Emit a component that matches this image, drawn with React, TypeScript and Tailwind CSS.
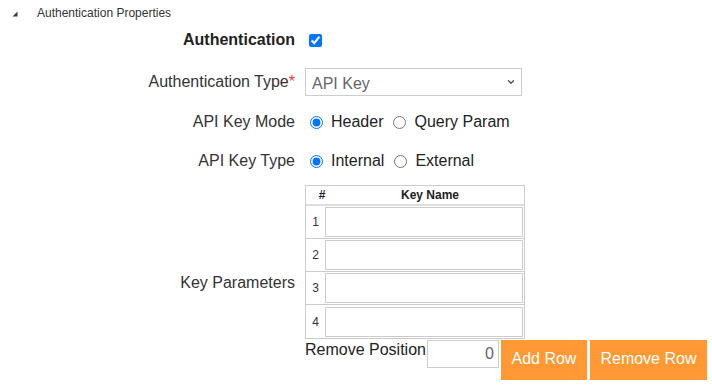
import { ChevronDown } from 'lucide-react';

const FONT = "font-['Liberation_Sans',Arial,sans-serif]";

function Label({ children }: { children: React.ReactNode }) {
  return <div className="w-[297px] shrink-0 pr-[2px] text-right text-[16px] text-[#333]">{children}</div>;
}

export default function App() {
  const rows = [1, 2, 3, 4];

  return (
    <div className={`${FONT} w-[712px] h-[385px] bg-white text-[#333] overflow-hidden`}>
      {/* section header */}
      <div className="flex h-[26px] items-center pl-[12px]">
        <svg width="6" height="6" viewBox="0 0 6 6" className="mt-[1px]">
          <polygon points="5.5,0.5 5.5,5.5 0.5,5.5" fill="#3a3a3a" />
        </svg>
        <span className="ml-[19px] text-[12px] text-[#333]">Authentication Properties</span>
      </div>

      {/* Authentication */}
      <div className="flex h-[28px] items-center">
        <div className="w-[297px] shrink-0 pr-[2px] text-right text-[16px] font-bold text-[#222]">Authentication</div>
        <input type="checkbox" defaultChecked className="ml-[12px] h-[13px] w-[13px] accent-[#0075ff]" />
      </div>

      {/* Authentication Type */}
      <div className="mt-[14px] flex h-[28px] items-center">
        <Label>
          Authentication Type<span className="text-[#e53935]">*</span>
        </Label>
        <div className="relative ml-[8px] h-[28px] w-[217px] border border-[#ccc] bg-white">
          <span className="absolute left-[6px] top-[3px] text-[16px] text-[#666]">API Key</span>
          <ChevronDown className="absolute right-[5px] top-[8px] h-[10px] w-[10px] text-[#555]" strokeWidth={3.5} />
        </div>
      </div>

      {/* API Key Mode */}
      <div className="mt-[12px] flex h-[28px] items-center">
        <Label>API Key Mode</Label>
        <div className="ml-[8px] flex items-center text-[16px] text-[#222]">
          <input type="radio" name="mode" defaultChecked className="ml-[5px] h-[13px] w-[13px] accent-[#0075ff]" />
          <span className="ml-[8px]">Header</span>
          <input type="radio" name="mode" className="ml-[10px] h-[13px] w-[13px]" />
          <span className="ml-[8px]">Query Param</span>
        </div>
      </div>

      {/* API Key Type */}
      <div className="mt-[11px] flex h-[28px] items-center">
        <Label>API Key Type</Label>
        <div className="ml-[8px] flex items-center text-[16px] text-[#222]">
          <input type="radio" name="ktype" defaultChecked className="ml-[5px] h-[13px] w-[13px] accent-[#0075ff]" />
          <span className="ml-[8px]">Internal</span>
          <input type="radio" name="ktype" className="ml-[10px] h-[13px] w-[13px]" />
          <span className="ml-[8px]">External</span>
        </div>
      </div>

      {/* Key Parameters */}
      <div className="mt-[10px] flex items-center">
        <Label>Key Parameters</Label>
        <div className="ml-[8px]">
          <div className="w-[220px] border border-[#ccc]">
            <div className="flex h-[20px] items-center border-b-2 border-[#ddd] text-[12px] font-bold text-[#222]">
              <div className="w-[32px] text-center">#</div>
              <div className="flex-1 pr-[2px] text-center">Key Name</div>
            </div>
            {rows.map((n, i) => (
              <div
                key={n}
                className={`flex h-[33px] items-center ${i < rows.length - 1 ? 'border-b border-[#ccc]' : ''}`}
              >
                <div className="w-[19px] text-center text-[12px] text-[#333]">{n}</div>
                <input className="h-[30px] w-[198px] border border-[#ccc] bg-white px-1 outline-none" />
              </div>
            ))}
          </div>
          <div className="mt-[1px] flex items-start">
            <span className="text-[16px] leading-[20px] text-[#222]">Remove Position</span>
            <input
              defaultValue="0"
              className="ml-[1px] h-[28px] w-[72px] border border-[#ccc] bg-white pr-[4px] text-right text-[16px] text-[#666] outline-none"
            />
            <button className="ml-[2px] h-[40px] w-[86px] bg-[#ff9933] pb-[2px] text-[16px] text-white">Add Row</button>
            <button className="ml-[3px] h-[40px] w-[117px] bg-[#ff9933] pb-[2px] text-[16px] text-white">Remove Row</button>
          </div>
        </div>
      </div>
    </div>
  );
}
